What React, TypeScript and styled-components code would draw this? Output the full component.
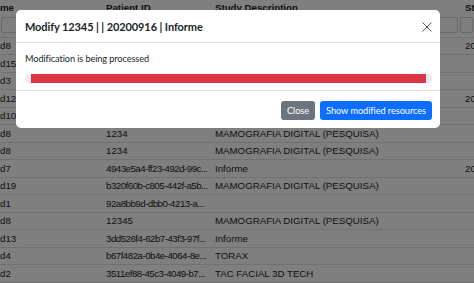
import styled, { createGlobalStyle } from 'styled-components';

const GlobalStyle = createGlobalStyle`
  html, body {
    margin: 0;
    padding: 0;
    background: #ffffff;
    overflow: hidden;
  }
  body {
    font-family: "Liberation Sans", Arial, sans-serif;
    color: #212529;
  }
`;

const Page = styled.div`
  position: relative;
  width: 474px;
  height: 283px;
  overflow: hidden;
`;

const Table = styled.div`
  display: grid;
  grid-template-columns: 100px 109px 250px 1fr;
  font-size: 9.7px;
`;

const Row = styled.div<{ $h?: number; $line?: boolean }>`
  display: contents;

  & > div {
    height: ${(p) => p.$h ?? 17.5}px;
    border-bottom: ${(p) => (p.$line === false ? 'none' : '1px solid #dee2e6')};
    box-sizing: border-box;
  }
`;

const Cell = styled.div<{ $first?: boolean; $bold?: boolean; $tight?: boolean }>`
  display: flex;
  align-items: center;
  padding-left: ${(p) => (p.$first ? 0 : 6)}px;
  white-space: nowrap;
  overflow: hidden;
  font-weight: ${(p) => (p.$bold ? 700 : 400)};
  letter-spacing: ${(p) => (p.$tight ? '-0.5px' : 'normal')};
`;

const FilterCell = styled.div`
  display: flex;
  align-items: center;
  padding: 0 1px;
`;

const FilterInput = styled.div`
  width: 100%;
  height: 14px;
  border: 1px solid #ced4da;
  border-radius: 2px;
  background: #fff;
`;

const Backdrop = styled.div`
  position: absolute;
  inset: 0;
  background: rgba(0, 0, 0, 0.5);
`;

const Modal = styled.div`
  position: absolute;
  left: 16px;
  top: 10px;
  width: 424px;
  height: 118px;
  background: #fff;
  border-radius: 5px;
  display: flex;
  flex-direction: column;
  font-family: Lato, "Noto Sans", sans-serif;
  color: #212529;
  overflow: hidden;
`;

const Header = styled.div`
  height: 33px;
  box-sizing: border-box;
  display: flex;
  align-items: center;
  justify-content: space-between;
  padding: 1px 7px 0 9px;
  border-bottom: 1px solid #dee2e6;
`;

const Title = styled.div`
  font-size: 11px;
  font-weight: 700;
  letter-spacing: -0.1px;
`;

const CloseX = styled.button`
  border: none;
  background: none;
  padding: 0;
  width: 12px;
  height: 12px;
  display: flex;
  align-items: center;
  justify-content: center;
`;

const Body = styled.div`
  height: 48px;
  box-sizing: border-box;
  padding: 9px 8px 0 9px;
  border-bottom: 1px solid #dee2e6;
  display: flex;
  flex-direction: column;
  gap: 9px;
`;

const Message = styled.div`
  font-size: 9.2px;
  line-height: 13px;
  letter-spacing: -0.1px;
`;

const Track = styled.div`
  height: 9px;
  background: #e9ecef;
  border-radius: 4px;
  padding: 0 6px;
  display: flex;
`;

const Fill = styled.div`
  background: #dc3545;
  height: 100%;
`;

const Footer = styled.div`
  flex: 1;
  display: flex;
  align-items: center;
  justify-content: flex-end;
  gap: 5px;
  padding: 1px 8px 0 0;
`;

const Button = styled.button<{ $variant: 'secondary' | 'primary' }>`
  height: 19px;
  border: none;
  border-radius: 3px;
  padding: 0 6px;
  font-family: Lato, "Noto Sans", sans-serif;
  font-size: 9.2px;
  letter-spacing: -0.05px;
  color: #fff;
  background: ${(p) => (p.$variant === 'primary' ? '#0d6efd' : '#6c757d')};
`;

const rows: [string, string, string, string][] = [
  ['d8', '', '', '20'],
  ['d15', '', '', ''],
  ['d3', '', '', ''],
  ['d12', '', '', '20'],
  ['d10', '', '', ''],
  ['d8', '1234', 'MAMOGRAFIA DIGITAL (PESQUISA)', ''],
  ['d8', '1234', 'MAMOGRAFIA DIGITAL (PESQUISA)', ''],
  ['d7', '4943e5a4-ff23-492d-99c...', 'Informe', '20'],
  ['d19', 'b320f60b-c805-442f-a5b...', 'MAMOGRAFIA DIGITAL (PESQUISA)', ''],
  ['d1', '92a8bb9d-dbb0-4213-a...', '', ''],
  ['d8', '12345', 'MAMOGRAFIA DIGITAL (PESQUISA)', ''],
  ['d13', '3dd526f4-62b7-43f3-97f...', 'Informe', ''],
  ['d4', 'b67f482a-0b4e-4064-8e...', 'TORAX', ''],
  ['d2', '3511ef88-45c3-4049-b7...', 'TAC FACIAL 3D TECH', ''],
];

export default function App() {
  const progress = 100;
  return (
    <>
      <GlobalStyle />
      <Page>
        <Table>
          <Row $h={14} $line={false}>
            <Cell $first $bold>me</Cell>
            <Cell $bold>Patient ID</Cell>
            <Cell $bold>Study Description</Cell>
            <Cell $bold>St</Cell>
          </Row>
          <Row $h={23.5}>
            <FilterCell><FilterInput /></FilterCell>
            <FilterCell><FilterInput /></FilterCell>
            <FilterCell><FilterInput /></FilterCell>
            <FilterCell><FilterInput /></FilterCell>
          </Row>
          {rows.map((r, i) => (
            <Row key={i}>
              <Cell $first>{r[0]}</Cell>
              <Cell $tight={r[1].length > 8}>{r[1]}</Cell>
              <Cell>{r[2]}</Cell>
              <Cell>{r[3]}</Cell>
            </Row>
          ))}
        </Table>
        <Backdrop />
        <Modal>
          <Header>
            <Title>Modify 12345 | | 20200916 | Informe</Title>
            <CloseX aria-label="Close">
              <svg width="10" height="10" viewBox="0 0 10 10">
                <path d="M0.5 0.5 L9.5 9.5 M9.5 0.5 L0.5 9.5" stroke="#555" strokeWidth="1" />
              </svg>
            </CloseX>
          </Header>
          <Body>
            <Message>Modification is being processed</Message>
            <Track>
              <Fill style={{ width: `${progress}%` }} />
            </Track>
          </Body>
          <Footer>
            <Button $variant="secondary">Close</Button>
            <Button $variant="primary">Show modified resources</Button>
          </Footer>
        </Modal>
      </Page>
    </>
  );
}
